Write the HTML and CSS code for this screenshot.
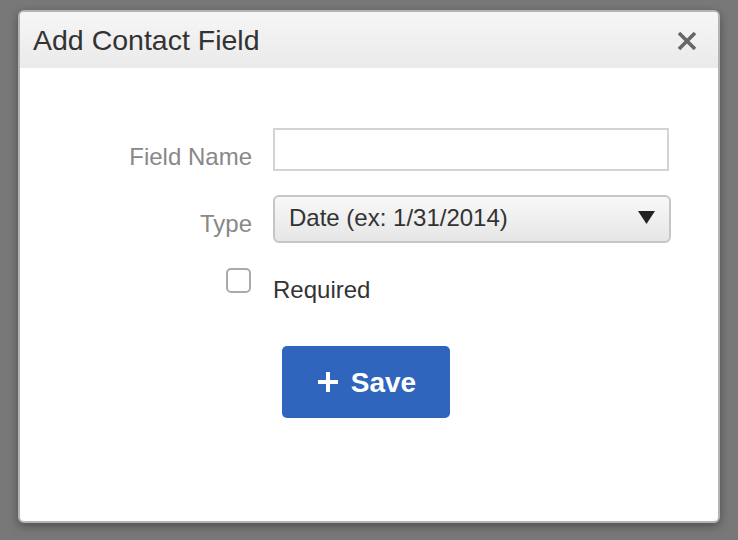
FILE: index.html
```html
<!DOCTYPE html>
<html>
<head>
<meta charset="utf-8">
<link rel="stylesheet" href="styles.css">
</head>
<body>
<div class="dialog">
  <div class="header">
    <h1 class="title">Add Contact Field</h1>
    <svg class="close" width="20" height="20" viewBox="0 0 20 20"><path d="M2 2 L18 18 M18 2 L2 18" stroke="#666" stroke-width="3.6" stroke-linecap="butt"/></svg>
  </div>
  <div class="content">
    <div class="form">
      <div class="label l-name">Field Name</div>
      <div class="input"></div>
      <div class="label l-type">Type</div>
      <div class="select"><span class="select-text">Date (ex: 1/31/2014)</span><svg class="arrow" width="17" height="13" viewBox="0 0 17 13"><path d="M0 0 H17 L8.5 13 Z" fill="#222"/></svg></div>
      <div class="check-cell"><span class="checkbox"></span></div>
      <div class="req">Required</div>
      <div class="spacer"></div>
      <div class="btn-cell"><button class="save"><svg width="20" height="20" viewBox="0 0 20 20"><path d="M10 0 V20 M0 10 H20" stroke="#fff" stroke-width="4"/></svg><span>Save</span></button></div>
    </div>
  </div>
</div>
</body>
</html>
```
FILE: styles.css
```css
html, body {
  margin: 0;
  padding: 0;
}
body {
  background: #787878;
  width: 738px;
  height: 540px;
  overflow: hidden;
  font-family: "Liberation Sans", Arial, sans-serif;
  padding-top: 10px;
  box-sizing: border-box;
}
.dialog {
  margin: 0 18px;
  height: 513px;
  background: #fff;
  border: 2px solid #b4b4b4;
  border-radius: 6px;
  box-sizing: border-box;
  box-shadow: 0 3px 10px rgba(0,0,0,0.35);
  overflow: hidden;
}
.header {
  height: 56px;
  background: linear-gradient(#f6f6f6, #ebeaeb);
  display: flex;
  align-items: center;
  justify-content: space-between;
  padding: 0 21px 0 13px;
}
.title {
  margin: 0;
  font-size: 28.5px;
  font-weight: normal;
  color: #333;
  line-height: 1;
  margin-top: 0;
}
.close {
  display: block;
  margin-top: 2px;
}
.content {
  padding-top: 60px;
}
.form {
  display: grid;
  grid-template-columns: 232px 398px;
  column-gap: 21px;
  align-items: start;
}
.label {
  text-align: right;
  color: #888;
  font-size: 24px;
  line-height: 26px;
}
.l-name { padding-top: 16px; }
.l-type { padding-top: 16px; margin-top: 24px; }
.input {
  width: 396px;
  height: 43px;
  border: 2px solid #d4d4d4;
  box-sizing: border-box;
  background: #fff;
}
.select {
  margin-top: 24px;
  height: 48px;
  border: 2px solid #c6c6c6;
  border-radius: 6px;
  box-sizing: border-box;
  background: linear-gradient(#f8f8f8, #e6e6e6);
  display: flex;
  align-items: center;
  justify-content: space-between;
  padding: 0 14px 0 14px;
}
.select-text {
  font-size: 24px;
  color: #333;
  line-height: 26px;
  margin-top: -3px;
}
.arrow {
  display: block;
  margin-top: -4px;
}
.check-cell {
  margin-top: 25px;
  display: flex;
  justify-content: flex-end;
  padding-right: 1px;
}
.checkbox {
  display: block;
  width: 25px;
  height: 25px;
  border: 2px solid #aaa;
  border-radius: 5px;
  box-sizing: border-box;
  background: #fff;
}
.req {
  margin-top: 34px;
  font-size: 24px;
  line-height: 26px;
  color: #333;
  padding-left: 0;
}
.btn-cell {
  margin-top: 43px;
  padding-left: 9px;
}
.save {
  width: 168px;
  height: 72px;
  background: #3065bd;
  border: none;
  border-radius: 5px;
  color: #fff;
  font-family: "Liberation Sans", Arial, sans-serif;
  font-size: 28px;
  font-weight: bold;
  display: flex;
  align-items: center;
  justify-content: center;
  gap: 13px;
  padding: 0 0 0 2px;
}
.save span {
  line-height: 1;
  margin-top: 1px;
}
.save svg {
  display: block;
}
```
